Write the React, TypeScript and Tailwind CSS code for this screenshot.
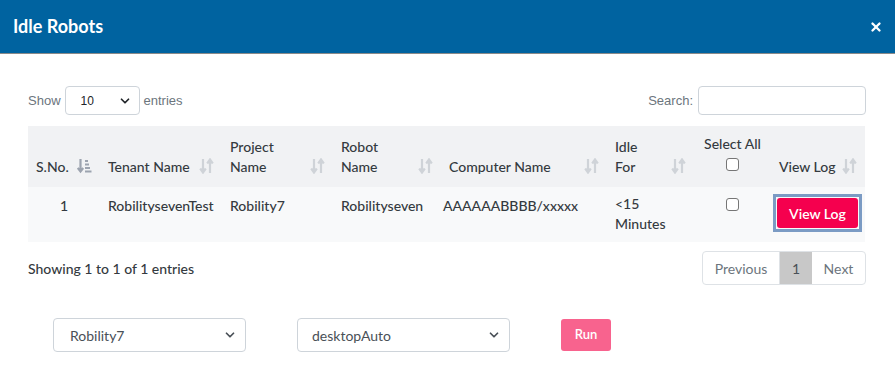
import { X, ChevronDown } from "lucide-react";

const font = { fontFamily: "Lato, 'Noto Sans', sans-serif" };

function SortIcon({ active = false }: { active?: boolean }) {
  if (active) {
    return (
      <svg width="15" height="16" viewBox="0 0 15 16" className="shrink-0">
        <path d="M3.5 1v12M0.8 10L3.5 13.5L6.2 10" stroke="#9ca3af" strokeWidth="2.2" fill="none" />
        <rect x="8" y="2" width="3" height="2" fill="#9ca3af" />
        <rect x="8" y="5.5" width="4" height="2" fill="#9ca3af" />
        <rect x="8" y="9" width="5" height="2" fill="#9ca3af" />
        <rect x="8" y="12.5" width="6.5" height="2" fill="#9ca3af" />
      </svg>
    );
  }
  return (
    <svg width="15" height="16" viewBox="0 0 15 16" className="shrink-0">
      <path d="M4 1v13M1.2 10.5L4 14.5L6.8 10.5" stroke="#cfd3d8" strokeWidth="2.2" fill="none" />
      <path d="M11 15V2M8.2 5.5L11 1.5L13.8 5.5" stroke="#cfd3d8" strokeWidth="2.2" fill="none" />
    </svg>
  );
}

function Th({ children, w }: { children: React.ReactNode; w: string }) {
  return (
    <th className={`${w} px-2 align-bottom pb-[10px] text-left font-medium`}>
      <div className="flex items-end justify-between gap-1">
        <span className="leading-[20px]">{children}</span>
        <span className="mb-[3px]">
          <SortIcon />
        </span>
      </div>
    </th>
  );
}

function Checkbox() {
  return <span className="inline-block w-[13px] h-[13px] rounded-[3px] border border-[#767676] bg-white" />;
}

export default function App() {
  return (
    <div className="w-[895px] h-[390px] bg-white overflow-hidden text-[#343a40]" style={font}>
      <div className="h-[54px] bg-[#0063a0] border-b border-[#8a8a8a] flex items-center justify-between pl-[13px] pr-[12px]">
        <h1 className="text-white text-[18px] font-bold">Idle Robots</h1>
        <X size={14} strokeWidth={4} className="text-white" />
      </div>

      <div className="px-[28px] pt-[32px]">
        <div className="flex items-center justify-between text-[13px] text-[#6c757d]" style={{ fontFamily: "'Liberation Sans', Arial, sans-serif" }}>
          <div className="flex items-center gap-[4px]">
            <span>Show</span>
            <div className="w-[75px] h-[29px] border border-[#ced4da] rounded-[4px] flex items-center justify-between pl-[15px] pr-[7px] text-[#212529] text-[12px]">
              <span>10</span>
              <ChevronDown size={14} strokeWidth={3} />
            </div>
            <span>entries</span>
          </div>
          <div className="flex items-center gap-[5px] mr-[1px]">
            <span>Search:</span>
            <div className="w-[168px] h-[29px] border border-[#ced4da] rounded-[4px]" />
          </div>
        </div>

        <table className="mt-[11px] w-[837px] table-fixed border-collapse text-[14px]">
          <thead>
            <tr className="h-[61px] bg-[#f1f2f4]">
              <th className="w-[72px] pl-[8px] pr-[8px] align-bottom pb-[10px] text-left font-medium">
                <div className="flex items-end justify-between">
                  <span className="leading-[20px]">S.No.</span>
                  <span className="mb-[3px]"><SortIcon active /></span>
                </div>
              </th>
              <Th w="w-[122px]">Tenant Name</Th>
              <Th w="w-[111px]">Project<br />Name</Th>
              <Th w="w-[108px]">Robot<br />Name</Th>
              <Th w="w-[166px]">Computer Name</Th>
              <Th w="w-[87px]">Idle<br />For</Th>
              <th className="w-[77px] align-bottom pb-[14px] font-medium text-center">
                <div className="leading-[22px]">Select All</div>
                <div className="h-[18px] flex items-center justify-center"><Checkbox /></div>
              </th>
              <Th w="w-[94px]">View Log</Th>
            </tr>
          </thead>
          <tbody>
            <tr className="h-[55px] bg-[#f8f9fa] align-top font-medium">
              <td className="text-center pt-[8px]">1</td>
              <td className="px-2 pt-[8px]">RobilitysevenTest</td>
              <td className="px-2 pt-[8px]">Robility7</td>
              <td className="px-2 pt-[8px]">Robilityseven</td>
              <td className="pl-[2px] pt-[8px]">AAAAAABBBB/xxxxx</td>
              <td className="px-2 pt-[7px] leading-[20px]">&lt;15<br />Minutes</td>
              <td className="text-center pt-[8px]"><Checkbox /></td>
              <td className="pt-[7px] pl-[2px]">
                <div className="inline-block border-[3px] border-[#7b9bc4] p-[1px]">
                  <button className="w-[81px] h-[30px] bg-[#f5004e] text-white rounded-[3px] font-semibold text-[14px]">View Log</button>
                </div>
              </td>
            </tr>
          </tbody>
        </table>

        <div className="flex items-center justify-between mt-[9px]">
          <span className="text-[14px] font-medium">Showing 1 to 1 of 1 entries</span>
          <div className="flex h-[34px] border border-[#dee2e6] rounded-[4px] text-[14px] text-[#6c757d] overflow-hidden mr-[1px]">
            <span className="w-[77px] flex items-center justify-center border-r border-[#dee2e6]">Previous</span>
            <span className="w-[32px] flex items-center justify-center bg-[#c8c8c8] text-[#495057]">1</span>
            <span className="w-[53px] flex items-center justify-center">Next</span>
          </div>
        </div>

        <div className="flex items-center mt-[33px] pl-[25px]">
          <div className="w-[193px] h-[34px] border border-[#ced4da] rounded-[4px] flex items-center justify-between pl-[16px] pr-[8px] text-[14px] text-[#495057]">
            <span>Robility7</span>
            <ChevronDown size={14} strokeWidth={3} />
          </div>
          <div className="ml-[51px] w-[213px] h-[34px] border border-[#ced4da] rounded-[4px] flex items-center justify-between pl-[14px] pr-[8px] text-[14px] text-[#495057]">
            <span>desktopAuto</span>
            <ChevronDown size={14} strokeWidth={3} />
          </div>
          <button className="ml-[51px] w-[50px] h-[32px] rounded-[3px] bg-[#f8638e] text-white text-[13px] font-semibold">Run</button>
        </div>
      </div>
    </div>
  );
}
